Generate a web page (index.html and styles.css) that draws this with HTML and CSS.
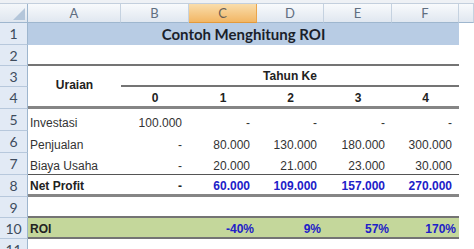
FILE: index.html
```html
<!DOCTYPE html>
<html lang="id">
<head>
    <meta charset="UTF-8">
    <meta name="viewport" content="width=device-width, initial-scale=1.0">
    <title>Contoh Menghitung ROI</title>

    <link rel="stylesheet" href="styles.css">
</head>
<body>
    <div class="sheet">
        <div class="topbar"></div>

        <div class="grid">
            <!-- column headers -->
            <div class="corner">
                <svg width="12" height="12" viewBox="0 0 12 12"><polygon points="12,0 12,12 0,12" fill="#b4c6da"/></svg>
            </div>
            <div class="colhead">A</div>
            <div class="colhead">B</div>
            <div class="colhead sel">C</div>
            <div class="colhead">D</div>
            <div class="colhead">E</div>
            <div class="colhead">F</div>
            <div class="colhead"></div>

            <!-- 1 -->
            <div class="rowhead">1</div>
            <div class="c title">Contoh Menghitung ROI</div>
            <div class="c"></div>

            <!-- 2 -->
            <div class="rowhead">2</div>
            <div class="c span6 line2"></div>
            <div class="c"></div>

            <!-- 3 + 4 -->
            <div class="rowhead">3</div>
            <div class="c head uraian line3">Uraian</div>
            <div class="c head tahun line2">Tahun Ke</div>
            <div class="c"></div>

            <div class="rowhead">4</div>
            <div class="c head line3">0</div>
            <div class="c head line3">1</div>
            <div class="c head line3">2</div>
            <div class="c head line3">3</div>
            <div class="c head line3">4</div>
            <div class="c"></div>

            <!-- 5 -->
            <div class="rowhead">5</div>
            <div class="c label">Investasi</div>
            <div class="c">100.000</div>
            <div class="c">-</div>
            <div class="c">-</div>
            <div class="c">-</div>
            <div class="c">-</div>
            <div class="c"></div>

            <!-- 6 -->
            <div class="rowhead">6</div>
            <div class="c label">Penjualan</div>
            <div class="c">-</div>
            <div class="c">80.000</div>
            <div class="c">130.000</div>
            <div class="c">180.000</div>
            <div class="c">300.000</div>
            <div class="c"></div>

            <!-- 7 -->
            <div class="rowhead">7</div>
            <div class="c label line1">Biaya Usaha</div>
            <div class="c line1">-</div>
            <div class="c line1">20.000</div>
            <div class="c line1">21.000</div>
            <div class="c line1">23.000</div>
            <div class="c line1">30.000</div>
            <div class="c"></div>

            <!-- 8 -->
            <div class="rowhead">8</div>
            <div class="c label bold line3">Net Profit</div>
            <div class="c bold line3">-</div>
            <div class="c bold blue line3">60.000</div>
            <div class="c bold blue line3">109.000</div>
            <div class="c bold blue line3">157.000</div>
            <div class="c bold blue line3">270.000</div>
            <div class="c"></div>

            <!-- 9 -->
            <div class="rowhead">9</div>
            <div class="c span6 line2"></div>
            <div class="c"></div>

            <!-- 10 -->
            <div class="rowhead">10</div>
            <div class="c label bold roi">ROI</div>
            <div class="c roi pct"></div>
            <div class="c bold blue roi pct">-40%</div>
            <div class="c bold blue roi pct">9%</div>
            <div class="c bold blue roi pct">57%</div>
            <div class="c bold blue roi pct">170%</div>
            <div class="c"></div>

            <!-- 11 -->
            <div class="rowhead">11</div>
            <div class="c span6"></div>
            <div class="c"></div>
        </div>
    </div>
</body>
</html>
```

FILE: styles.css
```css
* { box-sizing: border-box; }
body { margin: 0; background: #fff; font-family: "Liberation Sans", Arial, sans-serif; font-size: 12px; color: #333; }
.sheet { width: 474px; height: 249px; overflow: hidden; }
.topbar { height: 4px; background: #eef1f5; border-bottom: 1px solid #c3cfdd; }

.grid {
    display: grid;
    grid-template-columns: 28px 93px 68px 68px 67px 68px 67px 1fr;
    grid-template-rows: 19px 22px 21px 21px 22px 22px 22px 22px 22px 21px 21px 21px;
}

/* headers */
.corner { display: flex; align-items: flex-end; justify-content: flex-end; padding: 0 2px 2px 0; background: linear-gradient(#f4f7fa, #dfe6ef); border-right: 1px solid #9eb6ce; border-bottom: 1px solid #9eb6ce; }
.colhead { display: flex; align-items: center; justify-content: center; background: linear-gradient(#f8fafc, #e0e7f0); border-right: 1px solid #c5d2e0; border-bottom: 1px solid #9eb6ce; font-family: Lato, sans-serif; font-size: 13px; color: #5f6e80; }
.colhead.sel { background: linear-gradient(#f9ddac, #f2b664); border-right-color: #eaa54c; border-bottom-color: #e39a3c; color: #6a5f55; }
.rowhead { display: flex; align-items: center; justify-content: center; background: #e2eaf5; border-right: 1px solid #9eb6ce; border-bottom: 1px solid #b7c8dc; font-family: Lato, sans-serif; font-size: 14px; color: #3e4c5d; }

/* cells */
.c { display: flex; align-items: flex-end; justify-content: flex-end; padding: 0 7px 1px 0; line-height: 14px; white-space: nowrap; }
.label { justify-content: flex-start; padding-left: 2px; }
.span6 { grid-column: span 6; }
.title { grid-column: span 6; align-items: center; justify-content: center; padding: 0; background: #b8cce4; font-family: Lato, sans-serif; font-size: 15px; font-weight: 700; color: #1b1f2b; }
.head { justify-content: center; padding: 0 0 1px; font-weight: 700; color: #222; }
.uraian { grid-row: span 2; align-items: center; padding-bottom: 2px; }
.tahun { grid-column: span 5; align-items: center; padding-top: 2px; }
.bold { font-weight: 700; color: #222; }
.blue { color: #2020c8; }
.roi { background: #c4d79b; }
.pct { padding-right: 3px; }

/* borders */
.line1 { border-bottom: 1px solid #555; }
.line2 { border-bottom: 2px solid #747474; }
.line3 { border-bottom: 3px solid #858585; }
.roi { border-bottom: 2px solid #747474; }
```
